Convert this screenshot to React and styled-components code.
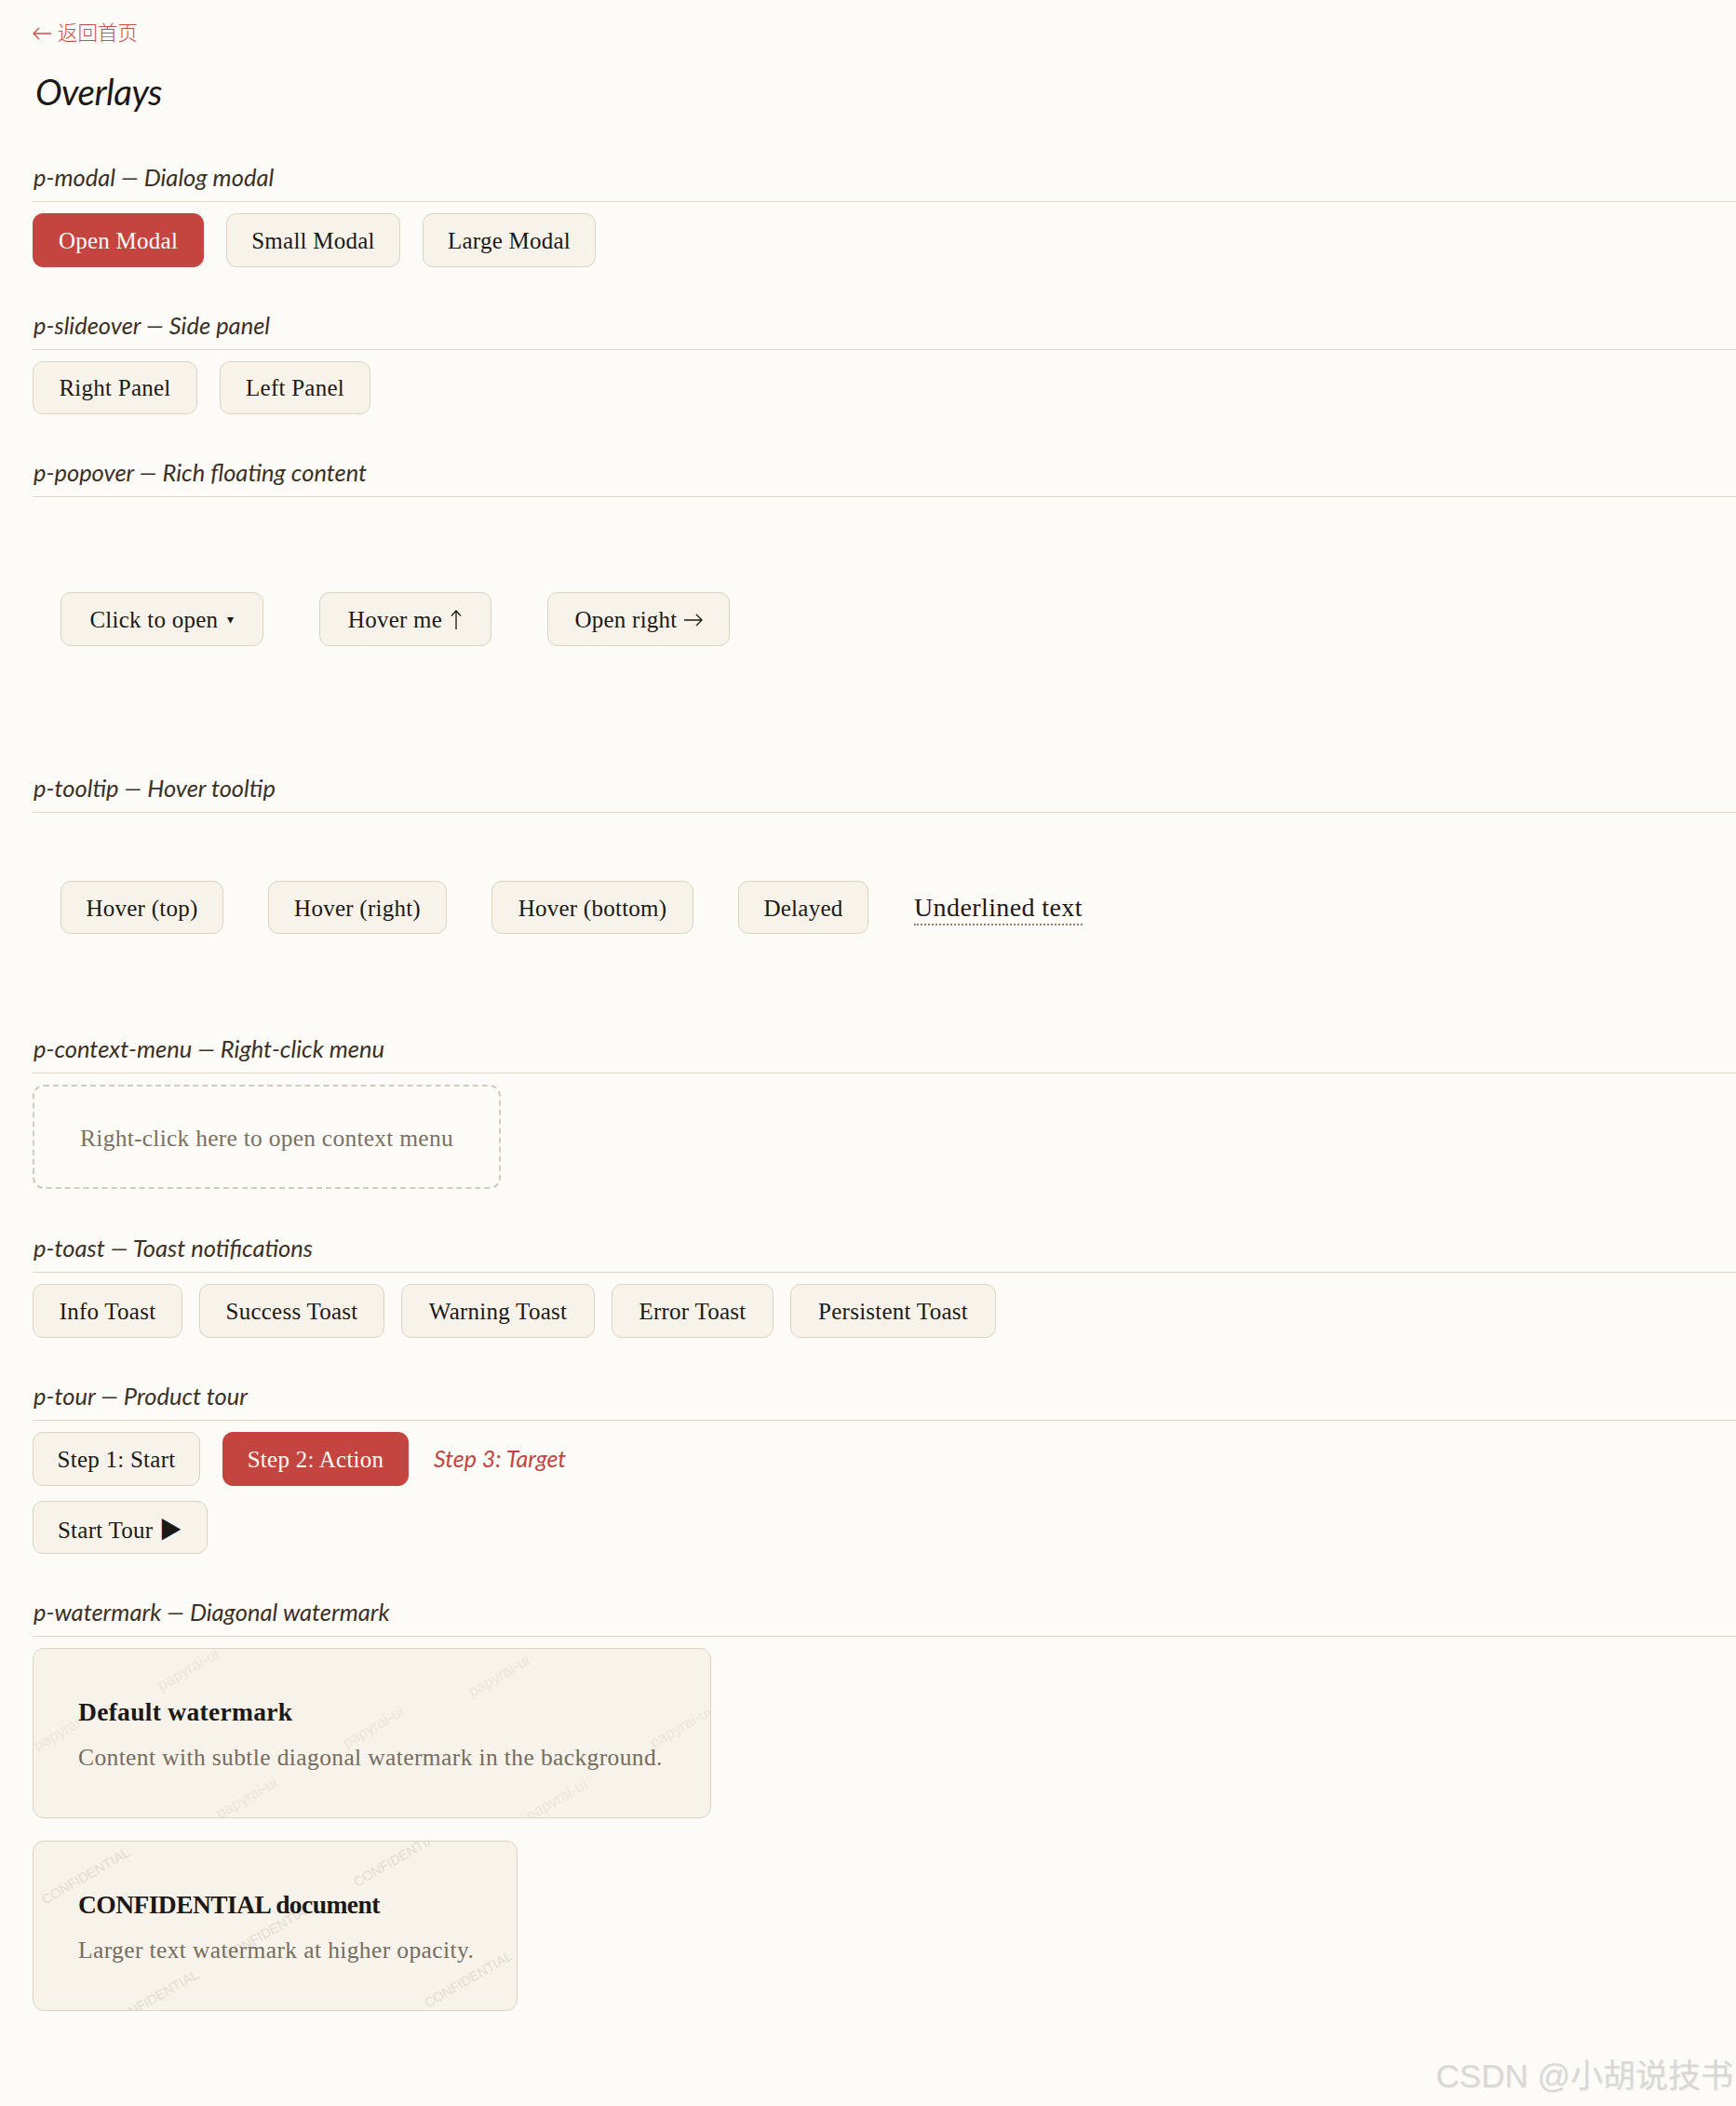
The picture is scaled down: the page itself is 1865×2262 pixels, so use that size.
import React from "react";
import styled, { createGlobalStyle } from "styled-components";

const serif = `"Liberation Serif", "Noto Sans CJK SC", serif`;
const hand = `"Lato", "Noto Sans", sans-serif`;

const Global = createGlobalStyle`
  html, body { margin: 0; padding: 0; background: #fdfbf7; }
  * { box-sizing: border-box; }
`;

const Page = styled.main`
  position: relative;
  min-height: 2262px;
  padding: 21px 0 0 35px;
  background: #fdfbf7;
  color: #1c1915;
  font-family: ${serif};
  overflow: hidden;
`;
const BackLink = styled.a`
  display: flex;
  align-items: center;
  gap: 7px;
  height: 30px;
  margin-bottom: 17px;
  font-size: 21.5px;
  line-height: 30px;
  color: #c9504a;
  font-weight: 300;
`;
const Title = styled.h1`
  margin: 0 0 44px 3px;
  height: 60px;
  font: italic 400 38.5px/60px ${hand};
  letter-spacing: -0.5px;
  color: #1c1915;
`;
const Section = styled.section`
  margin-bottom: ${(p) => p.$mb ?? 44}px;
`;
const Heading = styled.h2`
  margin: 0 0 12px;
  height: 45px;
  padding: 0 0 8px 1px;
  border-bottom: 1px solid #dfd6c6;
  font: italic 400 25.5px/36px ${hand};
  color: #3b3026;
`;
const Row = styled.div`
  display: flex;
  align-items: center;
  gap: ${(p) => p.$gap ?? 24}px;
  padding: ${(p) => p.$pad ?? "0"};
`;
const Stack = styled.div`
  display: flex;
  flex-direction: column;
  gap: ${(p) => p.$gap ?? 17}px;
`;
const Button = styled.button`
  display: inline-flex;
  align-items: center;
  justify-content: center;
  flex: none;
  width: ${(p) => p.$w}px;
  height: 57.6px;
  padding: 2px 0 0;
  border: 1px solid ${(p) => (p.$primary ? "#c4453f" : "#ddd3c0")};
  border-radius: 11px;
  background: ${(p) => (p.$primary ? "#c4453f" : "#f7f3ea")};
  color: ${(p) => (p.$primary ? "#fdfbf7" : "#1c1915")};
  font-family: ${serif};
  font-size: 25px;
  letter-spacing: 0.25px;
  white-space: nowrap;
`;
const Caret = styled.span`
  margin-left: 10px;
  font-size: 14px;
`;
const ArrowIcon = styled.svg`
  flex: none;
  margin-left: ${(p) => p.$ml ?? 0}px;
  fill: none;
  stroke: currentColor;
  stroke-width: 1.3;
`;
const Underlined = styled.span`
  margin-left: 1px;
  font-size: 28px;
  line-height: 34px;
  padding-top: 2px;
  border-bottom: 2px dotted #8a8172;
  letter-spacing: 0.4px;
`;
const TargetLabel = styled.span`
  margin-left: 3px;
  font: italic 400 25px/1 ${hand};
  color: #c4453f;
`;
const ContextArea = styled.div`
  width: 503px;
  height: 112px;
  display: flex;
  align-items: center;
  justify-content: center;
  padding-top: 3px;
  border: 2px dashed #d3cbbc;
  border-radius: 12px;
  color: #7a7164;
  font-size: 25.5px;
  letter-spacing: 0.25px;
`;
const Card = styled.div`
  position: relative;
  width: ${(p) => p.$w}px;
  height: 183px;
  padding: 48px;
  overflow: hidden;
  background: #f7f3ea;
  border: 1px solid #ddd3c0;
  border-radius: 12px;
`;
const CardTitle = styled.h3`
  position: relative;
  margin: 3px 0 15px;
  font-size: 27.5px;
  line-height: 34px;
  font-weight: 700;
  letter-spacing: ${(p) => p.$ls ?? 0}px;
  color: #1c1915;
`;
const CardText = styled.p`
  position: relative;
  margin: 0;
  font-size: 25.5px;
  line-height: 34px;
  letter-spacing: 0.38px;
  color: #756c60;
  white-space: nowrap;
`;
const Mark = styled.span`
  position: absolute;
  transform: translate(-50%, -50%) rotate(-30deg);
  font-family: "Liberation Sans", sans-serif;
  font-size: ${(p) => p.$size}px;
  color: ${(p) => p.$color};
  white-space: nowrap;
`;
const Credit = styled.div`
  position: absolute;
  right: 3px;
  bottom: 12px;
  font-family: "Liberation Sans", "Noto Sans CJK SC", sans-serif;
  font-size: 35px;
  line-height: 40px;
  color: #d8d8d6;
  text-shadow: 1px 1px 1px #eeeeec;
`;

const softMarks = [[166, 22], [500, 29], [33, 87], [365, 84], [695, 84], [229, 160], [562, 162]];
const hardMarks = [[56, 37], [391, 18], [252, 97], [467, 148], [130, 168]];

function Watermark({ items, text, size, color }) {
  return items.map(([x, y]) => (
    <Mark key={`${x}-${y}`} $size={size} $color={color} style={{ left: x, top: y }}>
      {text}
    </Mark>
  ));
}

const ArrowLeft = () => (
  <ArrowIcon width="20" height="14" viewBox="0 0 20 14">
    <path d="M20 7H1M7 1 1 7l6 6" />
  </ArrowIcon>
);
const ArrowUp = () => (
  <ArrowIcon $ml={8} width="14" height="21" viewBox="0 0 14 21">
    <path d="M7 21V1M2 6.5 7 1l5 5.5" />
  </ArrowIcon>
);
const ArrowRight = () => (
  <ArrowIcon $ml={7} width="20" height="14" viewBox="0 0 20 14">
    <path d="M0 7h19M13 1l6 6-6 6" />
  </ArrowIcon>
);

export default function App() {
  return (
    <Page>
      <Global />
      <BackLink><ArrowLeft />返回首页</BackLink>
      <Title>Overlays</Title>

      <Section>
        <Heading>p-modal — Dialog modal</Heading>
        <Row>
          <Button $primary $w={184}>Open Modal</Button>
          <Button $w={187}>Small Modal</Button>
          <Button $w={186}>Large Modal</Button>
        </Row>
      </Section>

      <Section>
        <Heading>p-slideover — Side panel</Heading>
        <Row>
          <Button $w={177}>Right Panel</Button>
          <Button $w={162}>Left Panel</Button>
        </Row>
      </Section>

      <Section>
        <Heading>p-popover — Rich floating content</Heading>
        <Row $gap={60} $pad="90px 30px">
          <Button $w={218}>Click to open<Caret>▾</Caret></Button>
          <Button $w={185}>Hover me<ArrowUp /></Button>
          <Button $w={196}>Open right<ArrowRight /></Button>
        </Row>
      </Section>

      <Section>
        <Heading>p-tooltip — Hover tooltip</Heading>
        <Row $gap={48} $pad="61px 30px 61px">
          <Button $w={175}>Hover (top)</Button>
          <Button $w={192}>Hover (right)</Button>
          <Button $w={217}>Hover (bottom)</Button>
          <Button $w={140}>Delayed</Button>
          <Underlined>Underlined text</Underlined>
        </Row>
      </Section>

      <Section $mb={45}>
        <Heading>p-context-menu — Right-click menu</Heading>
        <ContextArea>Right-click here to open context menu</ContextArea>
      </Section>

      <Section>
        <Heading>p-toast — Toast notifications</Heading>
        <Row $gap={18}>
          <Button $w={161}>Info Toast</Button>
          <Button $w={199}>Success Toast</Button>
          <Button $w={208}>Warning Toast</Button>
          <Button $w={174}>Error Toast</Button>
          <Button $w={221}>Persistent Toast</Button>
        </Row>
      </Section>

      <Section>
        <Heading>p-tour — Product tour</Heading>
        <Stack $gap={16}>
          <Row>
            <Button $w={180}>Step 1: Start</Button>
            <Button $primary $w={200}>Step 2: Action</Button>
            <TargetLabel>Step 3: Target</TargetLabel>
          </Row>
          <Row>
            <Button $w={188}>Start Tour ▶</Button>
          </Row>
        </Stack>
      </Section>

      <Section>
        <Heading>p-watermark — Diagonal watermark</Heading>
        <Stack $gap={24}>
          <Card $w={729}>
            <Watermark items={softMarks} text="papyrai-ui" size={16.5} color="#ebe6db" />
            <CardTitle $ls={0.3}>Default watermark</CardTitle>
            <CardText>Content with subtle diagonal watermark in the background.</CardText>
          </Card>
          <Card $w={521}>
            <Watermark items={hardMarks} text="CONFIDENTIAL" size={14.5} color="#e2ddd0" />
            <CardTitle $ls={-0.55}>CONFIDENTIAL document</CardTitle>
            <CardText>Larger text watermark at higher opacity.</CardText>
          </Card>
        </Stack>
      </Section>

      <Credit>CSDN @小胡说技书</Credit>
    </Page>
  );
}
